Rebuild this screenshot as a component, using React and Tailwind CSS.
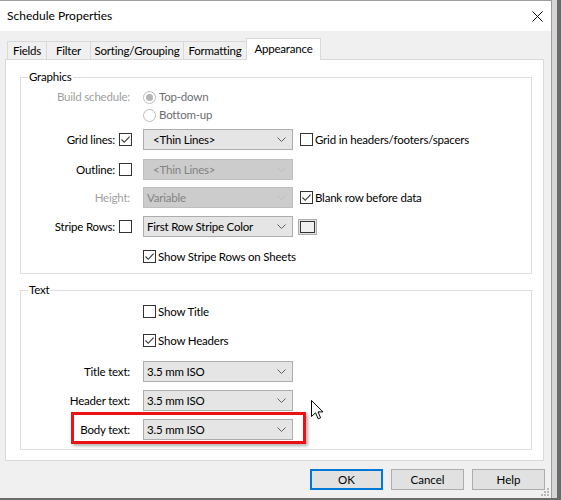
function Check({ checked }) {
  return (
    <span className="flex h-[13px] w-[13px] shrink-0 items-center justify-center border border-[#333333] bg-white">
      {checked && (
        <svg width="11" height="11" viewBox="0 0 11 11">
          <path d="M1.5 5.5 L4.2 8.3 L9.6 2.6" fill="none" stroke="#333333" strokeWidth="1.1" />
        </svg>
      )}
    </span>
  );
}

function Radio({ checked, label }) {
  return (
    <div className="flex h-[18px] items-center gap-[3px] text-[#6d6d6d]">
      <span className="flex h-[13px] w-[13px] items-center justify-center rounded-full border border-[#bcbcbc] bg-white">
        {checked && <span className="h-[7px] w-[7px] rounded-full bg-[#b4b4b4]" />}
      </span>
      <span>{label}</span>
    </div>
  );
}

function Chevron({ color }) {
  return (
    <svg width="9" height="5" viewBox="0 0 9 5">
      <path d="M0.5 0.5 L4.5 4.5 L8.5 0.5" fill="none" stroke={color} strokeWidth="1" />
    </svg>
  );
}

function Dropdown({ value, disabled, indent }) {
  return (
    <div
      className={
        disabled
          ? "flex h-[21px] w-[150px] shrink-0 items-center justify-between border border-[#bfbfbf] bg-[#cccccc] pr-[6px] text-[#838383]"
          : "flex h-[21px] w-[150px] shrink-0 items-center justify-between border border-[#adadad] bg-[#e5e5e5] pr-[6px] text-black"
      }
    >
      <span className={indent ? "pl-[9px]" : "pl-[3px]"}>{value}</span>
      <Chevron color={disabled ? "#bdbdbd" : "#606060"} />
    </div>
  );
}

function Label({ text, box, checked, muted }) {
  return (
    <div className="flex w-[111px] shrink-0 items-center justify-end">
      {box ? (
        <>
          <span className="mr-[4px]">{text}</span>
          <Check checked={checked} />
        </>
      ) : (
        <span className={muted ? "pr-[2px] text-[#a0a0a0]" : "pr-[2px]"}>{text}</span>
      )}
    </div>
  );
}

function CheckText({ checked, text }) {
  return (
    <div className="flex items-center gap-[2px]">
      <Check checked={checked} />
      <span>{text}</span>
    </div>
  );
}

function Group({ title, className, children }) {
  return (
    <div className={"relative w-[512px] border border-[#dcdcdc] " + className}>
      <span className="absolute -top-[9px] left-[7px] bg-white px-[1px] leading-[16px]">{title}</span>
      {children}
    </div>
  );
}

const tabs = [
  { name: "Fields", w: "w-[40px]" },
  { name: "Filter", w: "w-[45px]" },
  { name: "Sorting/Grouping", w: "w-[94px]" },
  { name: "Formatting", w: "w-[64px]" },
];

export default function App() {
  return (
    <div className="relative flex h-[500px] w-[561px] items-start bg-[#6a6a6a] font-['Lato',sans-serif] text-[11.5px] leading-[16px] tracking-[-0.2px] text-black">
      <div className="relative flex h-[498px] w-[552px] flex-col border-t border-r border-[#9d9d9d] bg-[#f0f0f0]">
        {/* title bar */}
        <div className="flex h-[30px] items-center justify-between bg-white pl-[7px] pr-[8px]">
          <span className="text-[12px] tracking-normal">Schedule Properties</span>
          <svg width="11" height="11" viewBox="0 0 11 11">
            <path d="M0.5 0.5 L10.5 10.5 M10.5 0.5 L0.5 10.5" stroke="#111111" strokeWidth="1" />
          </svg>
        </div>

        {/* tabs */}
        <div className="flex h-[28px] items-end pl-[7px] pt-[7px]">
          {tabs.map((t, i) => (
            <div
              key={t.name}
              className={
                "flex h-[18px] items-center justify-center border border-b-0 border-[#d9d9d9] bg-[#f0f0f0] " +
                t.w +
                (i > 0 ? " -ml-px" : "")
              }
            >
              {t.name}
            </div>
          ))}
          <div className="relative z-10 -mb-px -ml-px flex h-[22px] w-[75px] items-center justify-center border border-b-0 border-[#d9d9d9] bg-white pb-[2px]">
            Appearance
          </div>
        </div>

        {/* panel */}
        <div className="ml-[5px] h-[402px] w-[539px] border border-[#d9d9d9] bg-white pl-[14px] pt-[17px]">
          <Group title="Graphics" className="pb-[6px] pt-[10px]">
            <div className="flex h-[18px] items-center">
              <Label text="Build schedule:" muted />
              <div className="ml-[11px]">
                <Radio checked label="Top-down" />
              </div>
            </div>
            <div className="flex h-[18px] items-center">
              <div className="w-[111px]" />
              <div className="ml-[11px]">
                <Radio label="Bottom-up" />
              </div>
            </div>
            <div className="mt-[5px] flex h-[21px] items-center">
              <Label text="Grid lines:" box checked />
              <div className="ml-[11px]">
                <Dropdown value="<Thin Lines>" indent />
              </div>
              <div className="ml-[7px]">
                <CheckText text="Grid in headers/footers/spacers" />
              </div>
            </div>
            <div className="mt-[9px] flex h-[21px] items-center">
              <Label text="Outline:" box />
              <div className="ml-[11px]">
                <Dropdown value="<Thin Lines>" indent disabled />
              </div>
            </div>
            <div className="mt-[7px] flex h-[21px] items-center">
              <Label text="Height:" muted />
              <div className="ml-[11px]">
                <Dropdown value="Variable" disabled />
              </div>
              <div className="ml-[7px]">
                <CheckText checked text="Blank row before data" />
              </div>
            </div>
            <div className="mt-[8px] flex h-[21px] items-center">
              <Label text="Stripe Rows:" box />
              <div className="ml-[11px]">
                <Dropdown value="First Row Stripe Color" />
              </div>
              <div className="ml-[5px] h-[16px] w-[19px] border border-[#adadad] bg-[#e1e1e1] p-[1px]">
                <div className="h-full w-full border border-[#333333] bg-[#f0f0f0]" />
              </div>
            </div>
            <div className="mt-[9px] flex h-[21px] items-center">
              <div className="w-[111px]" />
              <div className="ml-[11px]">
                <CheckText checked text="Show Stripe Rows on Sheets" />
              </div>
            </div>
          </Group>

          <Group title="Text" className="mt-[16px] pb-[9px] pt-[10px]">
            <div className="flex h-[21px] items-center">
              <div className="w-[111px]" />
              <div className="ml-[11px]">
                <CheckText text="Show Title" />
              </div>
            </div>
            <div className="mt-[8px] flex h-[21px] items-center">
              <div className="w-[111px]" />
              <div className="ml-[11px]">
                <CheckText checked text="Show Headers" />
              </div>
            </div>
            <div className="mt-[10px] flex h-[21px] items-center">
              <Label text="Title text:" />
              <div className="ml-[11px]">
                <Dropdown value="3.5 mm ISO" />
              </div>
            </div>
            <div className="mt-[8px] flex h-[21px] items-center">
              <Label text="Header text:" />
              <div className="ml-[11px]">
                <Dropdown value="3.5 mm ISO" />
              </div>
            </div>
            <div className="relative mt-[8px] flex h-[21px] items-center">
              <Label text="Body text:" />
              <div className="ml-[11px]">
                <Dropdown value="3.5 mm ISO" />
              </div>
              <div className="absolute -top-[7px] left-[50px] h-[32px] w-[235px] border-[3px] border-[#ee1111] shadow-[2px_2px_3px_rgba(0,0,0,0.3)]" />
            </div>
          </Group>
        </div>

        {/* buttons */}
        <div className="mt-[8px] flex justify-end gap-[8px] pr-[6px]">
          <button className="h-[21px] w-[73px] border-2 border-[#0078d7] bg-[#e1e1e1] tracking-normal">OK</button>
          <button className="h-[21px] w-[73px] border border-[#adadad] bg-[#e1e1e1] tracking-normal">Cancel</button>
          <button className="h-[21px] w-[73px] border border-[#adadad] bg-[#e1e1e1] tracking-normal">Help</button>
        </div>

        <svg className="absolute bottom-[1px] right-[1px]" width="10" height="10" viewBox="0 0 10 10">
          <rect x="7" y="1" width="2" height="2" fill="#b8b8b8" />
          <rect x="4" y="4" width="2" height="2" fill="#b8b8b8" />
          <rect x="7" y="4" width="2" height="2" fill="#b8b8b8" />
          <rect x="1" y="7" width="2" height="2" fill="#b8b8b8" />
          <rect x="4" y="7" width="2" height="2" fill="#b8b8b8" />
          <rect x="7" y="7" width="2" height="2" fill="#b8b8b8" />
        </svg>
      </div>
      <div className="h-[498px] w-[5px] bg-[#d6d6d6]" />

      {/* mouse pointer */}
      <svg className="absolute left-[311px] top-[400px]" width="13" height="20" viewBox="0 0 13 20">
        <path
          d="M0.5 0.5 L0.5 16.5 L4.5 12.8 L7.2 18.8 L9.6 17.8 L7 11.9 L12 11.9 Z"
          fill="white"
          stroke="black"
          strokeWidth="1"
          strokeLinejoin="round"
        />
      </svg>
    </div>
  );
}
